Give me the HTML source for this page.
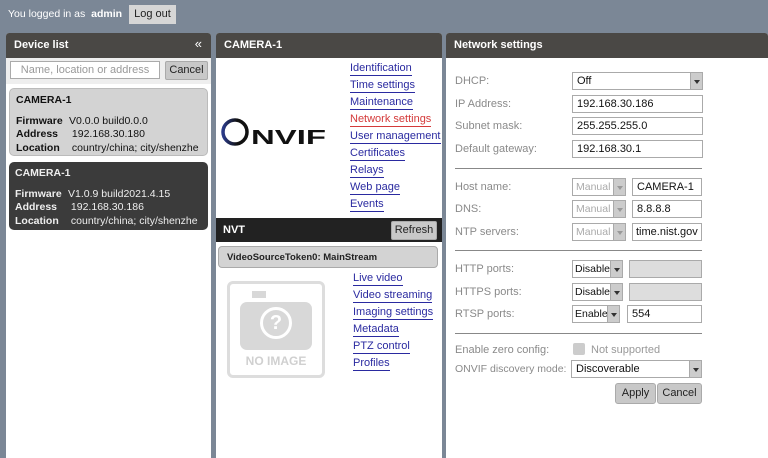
<!DOCTYPE html>
<html><head><meta charset="utf-8"><style>
*{margin:0;padding:0;box-sizing:border-box}
body{width:768px;height:458px;overflow:hidden;background:#7b8796;font-family:"Liberation Sans",sans-serif;font-size:11px;color:#222;position:relative}
.a{position:absolute}
.hd{background:#4a4845;color:#fff;font-weight:bold;font-size:11px;padding:6px 8px;height:25px}
.pn{position:absolute;top:33px;bottom:0;background:#fff;border-radius:3px 3px 0 0;overflow:hidden}
.lnk{position:absolute;color:#2a2aa0;font-size:11px;border-bottom:1px solid #2a2aa0;line-height:13px;white-space:nowrap}
.lb{position:absolute;left:9px;color:#8a8a8a;font-size:11px;white-space:nowrap}
.in{position:absolute;border:1px solid #aaa;background:#fff;height:18px;font-size:11px;padding:2px 4px;line-height:13px;color:#111;white-space:nowrap;overflow:hidden}
.sel .ar{position:absolute;right:0;top:0;bottom:0;width:12px;background:#ccc;border-left:1px solid #aaa}
.sel .ar:after{content:"";position:absolute;left:3px;top:7px;border-left:3px solid transparent;border-right:3px solid transparent;border-top:4px solid #333}
.dis{color:#aaa}
.dis .ar:after{border-top-color:#999}
.hr{position:absolute;left:9px;width:247px;height:1px;background:#888}
.card{position:absolute;left:3px;width:199px;border-radius:5px;padding:5px 6px;font-size:10.5px;line-height:13.5px;white-space:nowrap;overflow:hidden}
.card b{display:inline-block;width:53px}
.btn{position:absolute;background:#c8c8c8;border:1px solid #aaa;border-radius:2px;font-size:11px;text-align:center}
</style></head><body>
<div class="a" style="left:8px;top:8px;color:#fff;font-size:10.5px;white-space:nowrap">You logged in as &nbsp;<b>admin</b></div>
<div class="a" style="left:129px;top:5px;width:47px;height:19px;background:#d6d6d6;font-size:11px;text-align:center;line-height:19px;color:#222">Log out</div>

<div class="pn" style="left:6px;width:205px">
 <div class="hd">Device list<span style="position:absolute;right:9px;top:3px;font-size:13px;font-weight:normal">«</span></div>
 <div class="a" style="left:0;top:25px;width:205px;height:26px;background:#eee"></div>
 <div class="in" style="left:4px;top:28px;width:150px;color:#999;text-align:center">Name, location or address</div>
 <div class="btn" style="left:159px;top:28px;width:43px;height:19px;line-height:17px">Cancel</div>
 <div class="card" style="top:55px;height:68px;background:#d3d3d3;border:1px solid #bbb;color:#111"><div style="font-weight:bold;margin-bottom:7px">CAMERA-1</div><b>Firmware</b>V0.0.0 build0.0.0<br><b>Address</b> 192.168.30.180<br><b>Location</b> country/china; city/shenzhe</div>
 <div class="card" style="top:129px;height:68px;background:#3b3b3b;color:#eee"><div style="font-weight:bold;margin-bottom:7px">CAMERA-1</div><b>Firmware</b>V1.0.9 build2021.4.15<br><b>Address</b> 192.168.30.186<br><b>Location</b> country/china; city/shenzhe</div>
</div>

<div class="pn" style="left:216px;width:226px">
 <div class="hd">CAMERA-1</div>
 <svg class="a" style="left:5px;top:84px" width="108" height="30" viewBox="0 0 108 30">
  <defs><linearGradient id="g" x1="0" x2="1"><stop offset="0" stop-color="#2a3a88"/><stop offset="0.6" stop-color="#111"/></linearGradient></defs>
  <ellipse cx="14" cy="15" rx="12" ry="12" fill="none" stroke="url(#g)" stroke-width="3.5"/>
  <text x="30" y="27" font-family="Liberation Sans" font-weight="bold" font-size="20" textLength="75" lengthAdjust="spacingAndGlyphs" fill="#111">NVIF</text>
 </svg>
 <a class="lnk" style="left:134px;top:29px">Identification</a>
 <a class="lnk" style="left:134px;top:46px">Time settings</a>
 <a class="lnk" style="left:134px;top:63px">Maintenance</a>
 <a class="lnk" style="left:134px;top:80px;color:#d43a3a;border-color:#d43a3a">Network settings</a>
 <a class="lnk" style="left:134px;top:97px">User management</a>
 <a class="lnk" style="left:134px;top:114px">Certificates</a>
 <a class="lnk" style="left:134px;top:131px">Relays</a>
 <a class="lnk" style="left:134px;top:148px">Web page</a>
 <a class="lnk" style="left:134px;top:165px">Events</a>
 <div class="a" style="left:0;top:185px;width:226px;height:24px;background:#222;color:#fff;font-weight:bold;padding:6px 7px">NVT</div>
 <div class="btn" style="left:175px;top:188px;width:46px;height:19px;line-height:17px">Refresh</div>
 <div class="a" style="left:2px;top:213px;width:220px;height:22px;background:#d3d3d3;border:1px solid #aaa;border-radius:4px;font-weight:bold;font-size:9.5px;padding:5px 8px">VideoSourceToken0: MainStream</div>
 <div class="a" style="left:11px;top:248px;width:98px;height:97px;border:3px solid #ddd;border-radius:6px"></div>
 <div class="a" style="left:36px;top:258px;width:14px;height:7px;background:#d8d8d8"></div>
 <div class="a" style="left:24px;top:269px;width:72px;height:48px;background:#d8d8d8;border-radius:7px"></div>
 <div class="a" style="left:44px;top:274px;width:32px;height:32px;border:3px solid #fff;border-radius:50%;color:#fff;font-weight:bold;font-size:20px;text-align:center;line-height:26px">?</div>
 <div class="a" style="left:24px;top:321px;width:72px;text-align:center;color:#d0d0d0;font-weight:bold;font-size:12px">NO IMAGE</div>
 <a class="lnk" style="left:137px;top:239px">Live video</a>
 <a class="lnk" style="left:137px;top:256px">Video streaming</a>
 <a class="lnk" style="left:137px;top:273px">Imaging settings</a>
 <a class="lnk" style="left:137px;top:290px">Metadata</a>
 <a class="lnk" style="left:137px;top:307px">PTZ control</a>
 <a class="lnk" style="left:137px;top:324px">Profiles</a>
</div>

<div class="pn" style="left:446px;right:0">
 <div class="hd">Network settings</div>
 <div class="lb" style="top:42px">DHCP:</div>
 <div class="in sel" style="left:126px;top:39px;width:131px">Off<span class="ar"></span></div>
 <div class="lb" style="top:65px">IP Address:</div>
 <div class="in" style="left:126px;top:62px;width:131px">192.168.30.186</div>
 <div class="lb" style="top:87px">Subnet mask:</div>
 <div class="in" style="left:126px;top:84px;width:131px">255.255.255.0</div>
 <div class="lb" style="top:110px">Default gateway:</div>
 <div class="in" style="left:126px;top:107px;width:131px">192.168.30.1</div>
 <div class="hr" style="top:135px"></div>
 <div class="lb" style="top:148px">Host name:</div>
 <div class="in sel dis" style="left:126px;top:145px;width:54px;padding-left:3px;font-size:10.5px">Manual<span class="ar"></span></div>
 <div class="in" style="left:186px;top:145px;width:70px">CAMERA-1</div>
 <div class="lb" style="top:170px">DNS:</div>
 <div class="in sel dis" style="left:126px;top:167px;width:54px;padding-left:3px;font-size:10.5px">Manual<span class="ar"></span></div>
 <div class="in" style="left:186px;top:167px;width:70px">8.8.8.8</div>
 <div class="lb" style="top:193px">NTP servers:</div>
 <div class="in sel dis" style="left:126px;top:190px;width:54px;padding-left:3px;font-size:10.5px">Manual<span class="ar"></span></div>
 <div class="in" style="left:186px;top:190px;width:70px;padding-left:3px">time.nist.gov</div>
 <div class="hr" style="top:217px"></div>
 <div class="lb" style="top:230px">HTTP ports:</div>
 <div class="in sel" style="left:126px;top:227px;width:51px;padding-left:2px;font-size:10.5px">Disable<span class="ar"></span></div>
 <div class="in" style="left:183px;top:227px;width:73px;background:#ddd"></div>
 <div class="lb" style="top:253px">HTTPS ports:</div>
 <div class="in sel" style="left:126px;top:250px;width:51px;padding-left:2px;font-size:10.5px">Disable<span class="ar"></span></div>
 <div class="in" style="left:183px;top:250px;width:73px;background:#ddd"></div>
 <div class="lb" style="top:275px">RTSP ports:</div>
 <div class="in sel" style="left:126px;top:272px;width:48px;padding-left:2px;font-size:10.5px">Enable<span class="ar"></span></div>
 <div class="in" style="left:181px;top:272px;width:75px">554</div>
 <div class="hr" style="top:300px"></div>
 <div class="lb" style="top:311px">Enable zero config:</div>
 <div class="a" style="left:127px;top:310px;width:12px;height:12px;background:#ccc;border-radius:2px"></div>
 <div class="a" style="left:145px;top:311px;color:#999">Not supported</div>
 <div class="lb" style="top:330px;font-size:10.5px">ONVIF discovery mode:</div>
 <div class="in sel" style="left:125px;top:327px;width:131px">Discoverable<span class="ar"></span></div>
 <div class="btn" style="left:169px;top:350px;width:41px;height:21px;line-height:19px;border-radius:3px">Apply</div>
 <div class="btn" style="left:211px;top:350px;width:45px;height:21px;line-height:19px;border-radius:3px">Cancel</div>
</div>
</body></html>
